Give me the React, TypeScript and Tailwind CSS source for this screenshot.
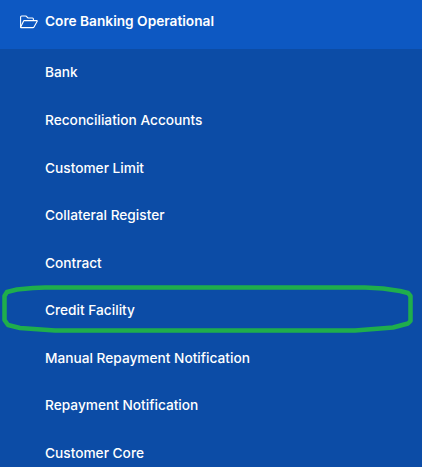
const items = [
  "Bank",
  "Reconciliation Accounts",
  "Customer Limit",
  "Collateral Register",
  "Contract",
  "Credit Facility",
  "Manual Repayment Notification",
  "Repayment Notification",
  "Customer Core",
];

export default function App() {
  return (
    <div className="relative h-[467px] w-[422px] overflow-hidden bg-[#0c4ca6] font-['Inter',sans-serif] text-white">
      <div className="flex h-[49px] items-start gap-[7px] bg-[#0d58c2] pl-5 pt-3 text-[13.7px] font-semibold leading-[18px]">
        <svg width="18" height="14" viewBox="0 0 18 14" fill="none" stroke="currentColor" strokeWidth="1.1" className="mt-[3px]">
          <path d="M0.6 12.4 V2 Q0.6 1 1.6 1 H6 L8 3 H12.5 Q13.4 3 13.4 4 V5.6" />
          <path d="M4 5.6 H16.8 Q17.5 5.6 17.2 6.3 L14 12 Q13.7 12.6 13 12.6 H0.9 Q0.4 12.6 0.7 12 L3.6 6 Q3.7 5.6 4 5.6 Z" />
        </svg>
        <span>Core Banking Operational</span>
      </div>
      <ul className="-mt-[0.43px] text-[13.7px] font-medium leading-[18px]">
        {items.map((item) => (
          <li key={item} className="flex h-[47.58px] items-center pl-[45px]">
            {item}
          </li>
        ))}
      </ul>
      <svg className="absolute left-0 top-0" width="422" height="467" fill="none">
        <path
          d="M45 287.5 H365 L383 288.5 L400 291 L408 293 L410.5 296 V321 L408 323.5 L393 327.5 L355 330.5 H55 L20 328 L8 325 L4.5 320 V296 L7 292 L17 289.5 L33 288 Z"
          stroke="#1fae4c"
          strokeWidth="4.5"
          strokeLinejoin="round"
        />
      </svg>
    </div>
  );
}
